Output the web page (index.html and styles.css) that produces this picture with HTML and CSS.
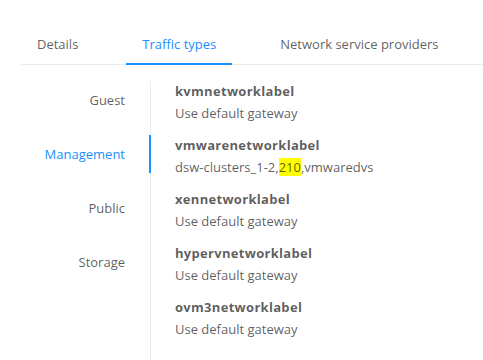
FILE: index.html
```html
<!DOCTYPE html>
<html lang="en">
<head>
  <meta charset="UTF-8" />
  <title>Physical network</title>
  <link rel="stylesheet" href="styles.css">
</head>
<body>
  <div class="page">
    <div class="tabs">
      <div class="tab">Details</div>
      <div class="tab active">Traffic types</div>
      <div class="tab">Network service providers</div>
    </div>

    <div class="panel">
      <div class="side">
        <div class="side-tab">Guest</div>
        <div class="side-tab active">Management</div>
        <div class="side-tab">Public</div>
        <div class="side-tab">Storage</div>
      </div>

      <div class="content">
        <div class="item">
          <div class="label">kvmnetworklabel</div>
          <div class="value">Use default gateway</div>
        </div>
        <div class="item">
          <div class="label">vmwarenetworklabel</div>
          <div class="value">dsw-clusters_1-2,<mark>210</mark>,vmwaredvs</div>
        </div>
        <div class="item">
          <div class="label">xennetworklabel</div>
          <div class="value">Use default gateway</div>
        </div>
        <div class="item">
          <div class="label">hypervnetworklabel</div>
          <div class="value">Use default gateway</div>
        </div>
        <div class="item">
          <div class="label">ovm3networklabel</div>
          <div class="value">Use default gateway</div>
        </div>
      </div>
    </div>
  </div>
</body>
</html>
```

FILE: styles.css
```css
body {
  margin: 0;
  font-family: 'Open Sans', sans-serif;
  font-size: 13px;
  color: rgba(0,0,0,0.65);
  background: #fff;
  overflow: hidden;
}

.page {
  padding: 22px 0 0 21px;
}

.tabs {
  display: flex;
  border-bottom: 1px solid #ebebeb;
  margin-bottom: 16px;
  white-space: nowrap;
}

.tab {
  padding: 11px 16px 8px;
  margin-right: 32px;
  line-height: 22px;
  border-bottom: 2px solid transparent;
  margin-bottom: -1px;
  flex-shrink: 0;
}

.tab.active {
  color: #1890ff;
  border-bottom-color: #1890ff;
}

.panel {
  display: flex;
}

.side {
  width: 129px;
  border-right: 1px solid #ebebeb;
  min-height: 300px;
}

.side-tab {
  text-align: right;
  padding: 8px 24px 8px 0;
  line-height: 22px;
  margin-bottom: 16px;
  margin-right: -1px;
  border-right: 2px solid transparent;
}

.side-tab.active {
  color: #1890ff;
  border-right-color: #1890ff;
}

.content {
  padding-left: 24px;
  margin-top: -1px;
}

.item {
  margin-bottom: 10px;
  line-height: 22px;
}

.label {
  font-weight: bold;
  letter-spacing: 0.3px;
}

mark {
  background: #ffff00;
  color: inherit;
}
```
